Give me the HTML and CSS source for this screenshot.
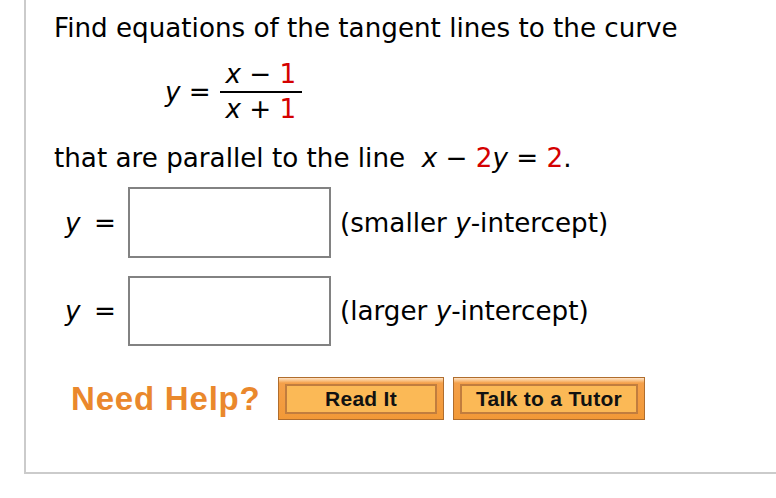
FILE: index.html
```html
<!DOCTYPE html>
<html>
<head>
<meta charset="utf-8">
<link rel="stylesheet" href="styles.css">
</head>
<body>
<div class="panel">
  <p class="line first">Find equations of the tangent lines to the curve</p>
  <div class="formula">
    <span class="lhs"><i>y</i> =</span>
    <span class="frac">
      <span class="num"><i>x</i> − <span class="red">1</span></span>
      <span class="bar"></span>
      <span class="den"><i>x</i> + <span class="red">1</span></span>
    </span>
  </div>
  <p class="line second">that are parallel to the line&nbsp; <i>x</i> − <span class="red">2</span><i>y</i> = <span class="red">2</span>.</p>
  <div class="answer">
    <span class="yl"><i>y</i></span><span class="eq">=</span>
    <span class="box"></span>
    <span class="hint">(smaller <i>y</i>-intercept)</span>
  </div>
  <div class="answer second-row">
    <span class="yl"><i>y</i></span><span class="eq">=</span>
    <span class="box"></span>
    <span class="hint">(larger <i>y</i>-intercept)</span>
  </div>
  <div class="help">
    <span class="need">Need Help?</span>
    <span class="btn read"><span class="inner">Read It</span></span>
    <span class="btn tutor"><span class="inner">Talk to a Tutor</span></span>
  </div>
</div>
</body>
</html>
```
FILE: styles.css
```css
html, body {
  margin: 0;
  padding: 0;
  background: #fff;
}
body {
  font-family: "DejaVu Sans", Verdana, sans-serif;
  font-size: 26.2px;
  color: #000;
  overflow: hidden;
}
.panel {
  margin-left: 24px;
  border-left: 2px solid #cbcbcb;
  border-bottom: 2px solid #cbcbcb;
  padding: 13px 0 52px 28px;
}
.line {
  margin: 0;
  line-height: 30px;
  white-space: nowrap;
}
.red {
  color: #d40000;
}
i {
  font-style: italic;
}
.formula {
  display: flex;
  align-items: center;
  margin-top: 18px;
  padding-left: 111px;
}
.lhs {
  line-height: 26px;
  margin-right: 9px;
  white-space: pre;
}
.frac {
  display: flex;
  flex-direction: column;
  align-items: center;
  width: 82px;
}
.num, .den {
  line-height: 26px;
  white-space: nowrap;
}
.bar {
  align-self: stretch;
  height: 2px;
  background: #000;
  margin: 4px 0 3px;
}
.second {
  margin-top: 21px;
}
.answer {
  display: flex;
  align-items: center;
  margin-top: 14px;
  padding-left: 11px;
}
.second-row {
  margin-top: 18px;
}
.second-row .box {
  height: 66px;
}
.yl {
  width: 29px;
}
.eq {
  width: 34px;
}
.box {
  width: 199px;
  height: 67px;
  border: 2px solid #828282;
  background: #fff;
  box-sizing: content-box;
}
.hint {
  margin-left: 9px;
  white-space: nowrap;
  line-height: 30px;
}
.help {
  display: flex;
  align-items: center;
  margin-top: 31px;
  padding-left: 17px;
}
.need {
  font-family: "Liberation Sans", Arial, sans-serif;
  font-weight: bold;
  font-size: 33px;
  letter-spacing: 0.8px;
  color: #ea882c;
  width: 207px;
  line-height: 43px;
  white-space: nowrap;
}
.btn {
  display: block;
  box-sizing: border-box;
  height: 43px;
  border: 1px solid #b06d2d;
  padding: 6px 6px 5px;
  background: linear-gradient(#fde2c6 0, #f9bd7c 3px, #f4a04a 5px, #f29937 100%);
}
.read {
  width: 166px;
}
.tutor {
  width: 192px;
  margin-left: 9px;
}
.inner {
  display: flex;
  align-items: center;
  justify-content: center;
  box-sizing: border-box;
  height: 100%;
  border: 2px solid #c17d3e;
  background: #fbb956;
  font-family: "Liberation Sans", Arial, sans-serif;
  font-weight: bold;
  font-size: 21px;
  letter-spacing: 0.3px;
  color: #111;
  white-space: nowrap;
}
```
